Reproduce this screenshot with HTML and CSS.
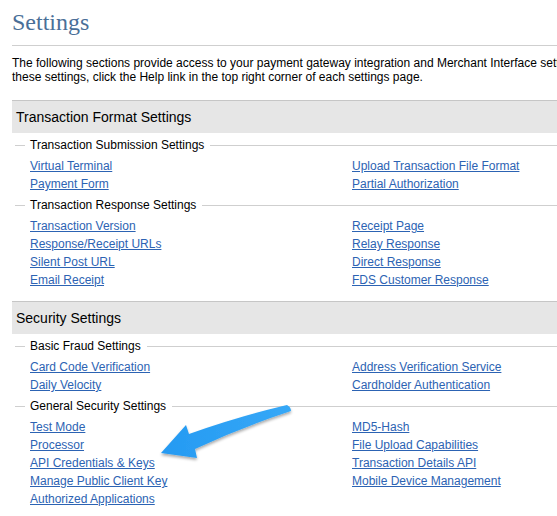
FILE: index.html
```html
<!DOCTYPE html>
<html>
<head>
<meta charset="utf-8">
<link rel="stylesheet" href="styles.css">
</head>
<body>
<div class="page">
  <h1 class="title">Settings</h1>
  <p class="intro">The following sections provide access to your payment gateway integration and Merchant Interface settings. For more information about<br>these settings, click the Help link in the top right corner of each settings page.</p>

  <section class="section">
    <h2 class="bar">Transaction Format Settings</h2>
    <div class="legend"><span class="rule-short"></span><span class="legend-text">Transaction Submission Settings</span><span class="rule-long"></span></div>
    <div class="links">
      <a href="#">Virtual Terminal</a><a href="#">Upload Transaction File Format</a>
      <a href="#">Payment Form</a><a href="#">Partial Authorization</a>
    </div>
    <div class="legend"><span class="rule-short"></span><span class="legend-text">Transaction Response Settings</span><span class="rule-long"></span></div>
    <div class="links">
      <a href="#">Transaction Version</a><a href="#">Receipt Page</a>
      <a href="#">Response/Receipt URLs</a><a href="#">Relay Response</a>
      <a href="#">Silent Post URL</a><a href="#">Direct Response</a>
      <a href="#">Email Receipt</a><a href="#">FDS Customer Response</a>
    </div>
  </section>

  <section class="section section-2">
    <h2 class="bar">Security Settings</h2>
    <div class="legend"><span class="rule-short"></span><span class="legend-text">Basic Fraud Settings</span><span class="rule-long"></span></div>
    <div class="links">
      <a href="#">Card Code Verification</a><a href="#">Address Verification Service</a>
      <a href="#">Daily Velocity</a><a href="#">Cardholder Authentication</a>
    </div>
    <div class="legend"><span class="rule-short"></span><span class="legend-text">General Security Settings</span><span class="rule-long"></span></div>
    <div class="links">
      <a href="#">Test Mode</a><a href="#">MD5-Hash</a>
      <a href="#">Processor</a><a href="#">File Upload Capabilities</a>
      <a href="#">API Credentials &amp; Keys</a><a href="#">Transaction Details API</a>
      <a href="#">Manage Public Client Key</a><a href="#">Mobile Device Management</a>
      <a href="#">Authorized Applications</a>
    </div>
  </section>
</div>

<svg class="arrow" width="557" height="516" viewBox="0 0 557 516" xmlns="http://www.w3.org/2000/svg">
  <defs>
    <filter id="sh" x="-20%" y="-20%" width="140%" height="140%">
      <feGaussianBlur in="SourceAlpha" stdDeviation="1.5"/>
      <feOffset dx="0" dy="1.5" result="b"/>
      <feComponentTransfer><feFuncA type="linear" slope="0.35"/></feComponentTransfer>
      <feMerge><feMergeNode/><feMergeNode in="SourceGraphic"/></feMerge>
    </filter>
    <linearGradient id="g" x1="0" y1="0" x2="1" y2="0">
      <stop offset="0" stop-color="#259af2"/>
      <stop offset="1" stop-color="#36a8f7"/>
    </linearGradient>
  </defs>
  <path filter="url(#sh)" fill="url(#g)" d="M287,405 Q291,407 291,411 Q242,427 195,449 L197,458 L161,453 L186,425 L189,434 Q240,416 287,405 Z"/>
</svg>
</body>
</html>
```

FILE: styles.css
```css
html, body {
  margin: 0;
  padding: 0;
  overflow: hidden;
  background: #fff;
}

body {
  font-family: "Liberation Sans", Arial, Helvetica, sans-serif;
  color: #000;
  position: relative;
  width: 557px;
  height: 516px;
}

.page {
  width: 740px;
  padding: 0 0 0 12px;
}

.title {
  margin: 8px 0 0;
  padding: 0 0 9px;
  font-family: "Liberation Serif", Georgia, serif;
  font-weight: normal;
  font-size: 24px;
  line-height: 28px;
  color: #4a6f98;
  border-bottom: 1px solid #cfcfcf;
}

.intro {
  margin: 10px 0 0;
  font-size: 12px;
  line-height: 14px;
  white-space: nowrap;
}

.section {
  margin-top: 16px;
}

.section-2 {
  margin-top: 12px;
}

.bar {
  margin: 0 0 1px;
  padding: 8px 4px;
  font-weight: normal;
  font-size: 14px;
  line-height: 16px;
  background: #e6e6e6;
  border-top: 1px solid #c6c6c6;
}

.legend {
  display: flex;
  align-items: center;
  height: 16px;
  margin: 4px 0;
  font-size: 12px;
}

.rule-short {
  width: 10px;
  height: 1px;
  margin-left: 3px;
  background: #cfcfcf;
}

.legend-text {
  padding: 0 6px 0 5px;
  line-height: 16px;
}

.rule-long {
  flex: 1;
  height: 1px;
  background: #cfcfcf;
}

.links {
  display: grid;
  grid-template-columns: 322px auto;
  padding-left: 18px;
  font-size: 12px;
  line-height: 18px;
}

.links a {
  color: #2c63b3;
  text-decoration: underline;
  justify-self: start;
}

.arrow {
  position: absolute;
  left: 0;
  top: 0;
  pointer-events: none;
}
```
